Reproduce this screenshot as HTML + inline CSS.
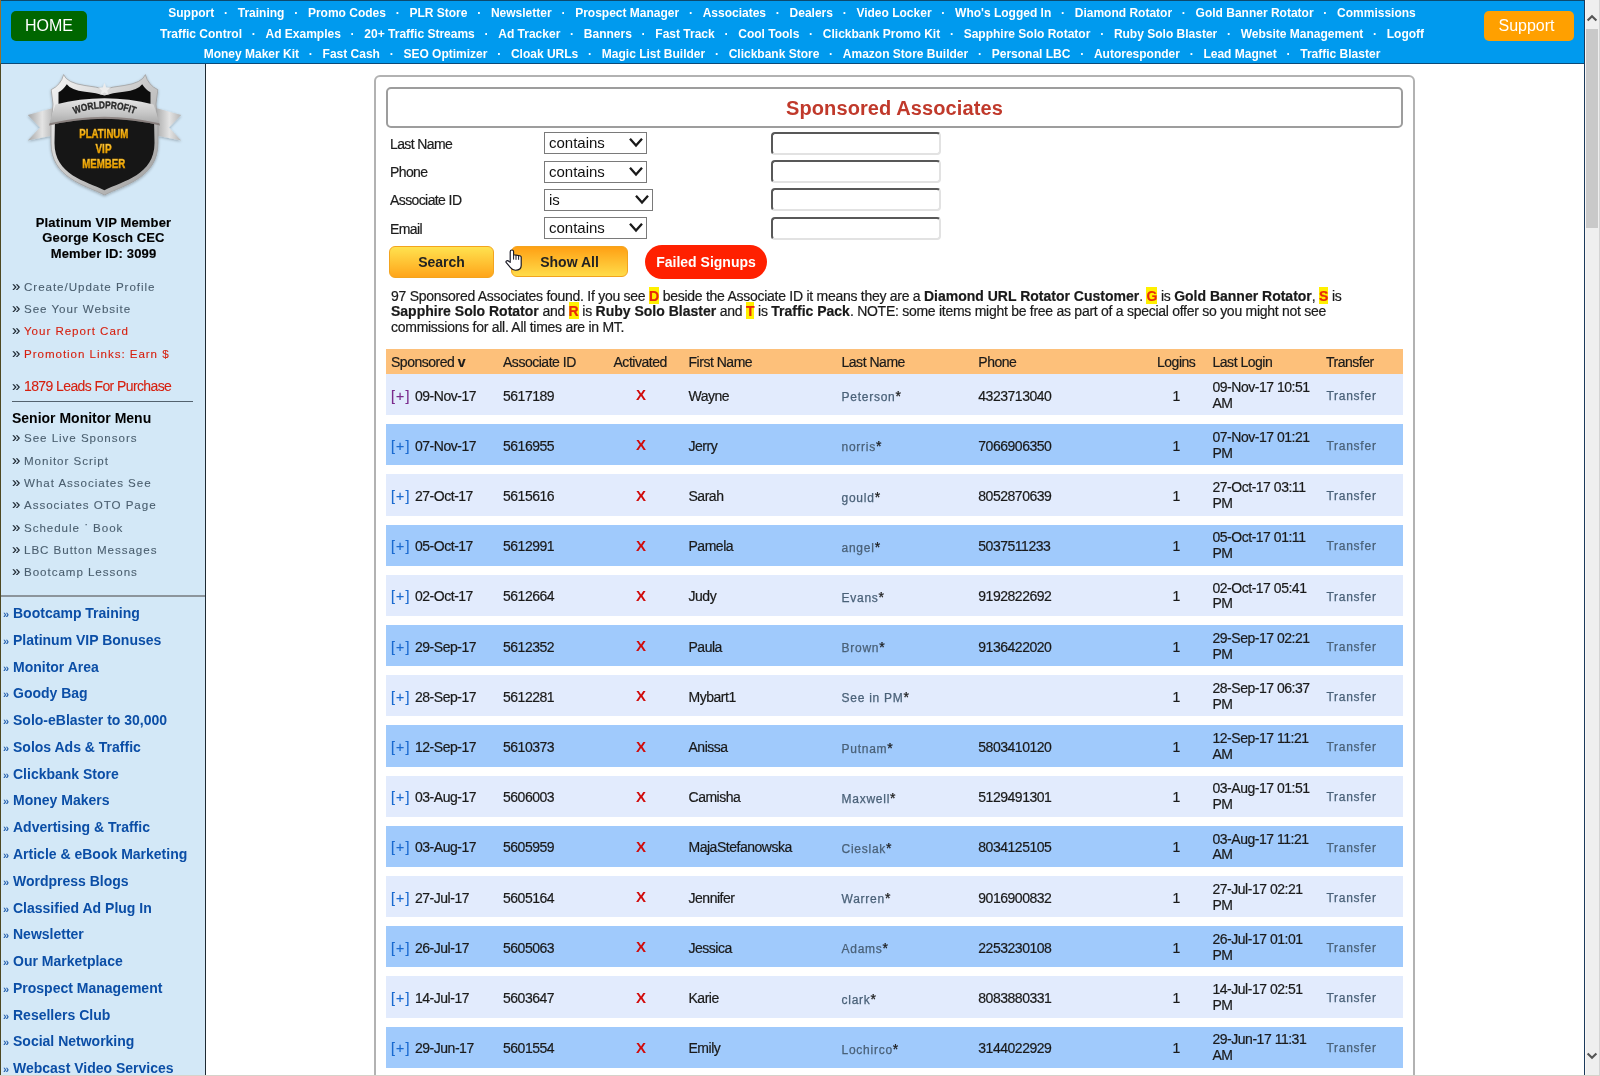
<!DOCTYPE html>
<html><head><meta charset="utf-8">
<style>
*{box-sizing:border-box}
html,body{margin:0;padding:0;width:1600px;height:1076px;overflow:hidden;background:#fff;font-family:"Liberation Sans",sans-serif;}
#wrap{position:absolute;left:0;top:0;width:1600px;height:1076px;will-change:transform}
.lab,.p13,.th,.t13{-webkit-text-stroke:0.2px currentColor}
.sl{-webkit-text-stroke:0.1px currentColor}
.vd{-webkit-text-stroke:0.25px currentColor}
.a{position:absolute;white-space:nowrap}
#lb{left:0;top:0;width:1px;height:1076px;background:linear-gradient(#9a7028 0,#9a7028 63px,#4d4822 64px)}
#hdr{left:1px;top:0;width:1583px;height:64px;background:#009aee;border-top:1px solid #0d4a6e;border-bottom:1px solid #0c4a78}
#home{left:11px;top:11px;width:76px;height:30px;background:#006600;border-radius:5px;color:#fff;font-size:16px;line-height:30px;text-align:center}
#sup{left:1484px;top:11px;width:90px;height:30px;background:#ffa000;border-radius:5px;color:#fff;font-size:16px;line-height:30px;text-align:center;padding-right:5px}
.nav{left:0;width:1584px;text-align:center;color:#fff;font-weight:bold;font-size:12px;line-height:14px}
.nav i{font-style:normal;display:inline-block;width:23.5px;text-align:center}
#side{left:1px;top:64px;width:205px;height:1012px;background:#d3e8f7;border-right:1px solid #1e2a33}
#rline{left:1584px;top:0;width:1px;height:1076px;background:#1a3a5c}
#sb{left:1585px;top:0;width:15px;height:1076px;background:#efefef}
#thumb{left:1586px;top:29px;width:12px;height:199px;background:#c9c9c9}
#bline{left:0;top:1075px;width:1600px;height:1px;background:#d6d2ca}
.sl{left:12px;font-size:11.6px;color:#4a5e6e;letter-spacing:0.95px;line-height:16px}
.sl b{font-weight:normal;font-size:15px;line-height:10px;color:#16202a;display:inline-block;width:12px;letter-spacing:0}
.red{color:#d6200f}
.bl{left:3px;font-size:14px;font-weight:bold;color:#0b4ea6;line-height:18px}
.bl b{font-size:11px;color:#2a64b0;display:inline-block;width:10px}
.t13{font-size:14px;letter-spacing:-0.48px;color:#1a1a1a;line-height:16px}
.vd{font-size:12px;color:#4a6178;letter-spacing:0.75px}
.vd i{font-style:normal;color:#1a1a1a;font-size:14px;letter-spacing:0}
.row{left:386px;width:1017px;height:41px}
.r1{background:#e2ebfd}
.r2{background:#a0cafc}

.box{left:374px;top:75px;width:1041px;height:1100px;border:2px solid #b2b2b2;border-radius:6px}
.tbox{left:386px;top:87px;width:1017px;height:41px;border:2px solid #9d9d9d;border-radius:5px}
.lab{left:390px;font-size:14px;letter-spacing:-0.6px;color:#1c1c1c;line-height:16px}
.sel{left:544px;width:103px;height:22px;border:1px solid #7a7a7a;background:#fff;font-size:15px;color:#111;padding-left:4px;line-height:19px}
.sel svg{position:absolute;right:3px;top:4px}
.inp{left:771px;width:170px;height:23px;border-top:2px solid #585858;border-left:2px solid #585858;border-bottom:2px solid #e2e2e2;border-right:2px solid #e2e2e2;border-radius:4px;background:#fff}
.btn{top:245px;height:33px;border-radius:6px;font-size:14px;font-weight:bold;text-align:center;line-height:31px}
.p13{left:391px;font-size:14px;color:#1a1a1a;line-height:16px;letter-spacing:-0.27px}
.p13 b{letter-spacing:0}
.hl{background:#fff000;color:#e82a0a;font-weight:bold;padding:1px 0 0 0;letter-spacing:0 !important}
.th{font-size:14px;letter-spacing:-0.48px;color:#1a1a1a;line-height:16px}
</style></head><body>
<div id="wrap">
<div class="a" id="hdr"></div>
<div class="a" id="home">HOME</div>
<div class="a" id="sup">Support</div>
<div class="a nav" style="top:6px">Support<i>·</i>Training<i>·</i>Promo Codes<i>·</i>PLR Store<i>·</i>Newsletter<i>·</i>Prospect Manager<i>·</i>Associates<i>·</i>Dealers<i>·</i>Video Locker<i>·</i>Who's Logged In<i>·</i>Diamond Rotator<i>·</i>Gold Banner Rotator<i>·</i>Commissions</div>
<div class="a nav" style="top:26.5px">Traffic Control<i>·</i>Ad Examples<i>·</i>20+ Traffic Streams<i>·</i>Ad Tracker<i>·</i>Banners<i>·</i>Fast Track<i>·</i>Cool Tools<i>·</i>Clickbank Promo Kit<i>·</i>Sapphire Solo Rotator<i>·</i>Ruby Solo Blaster<i>·</i>Website Management<i>·</i>Logoff</div>
<div class="a nav" style="top:47px">Money Maker Kit<i>·</i>Fast Cash<i>·</i>SEO Optimizer<i>·</i>Cloak URLs<i>·</i>Magic List Builder<i>·</i>Clickbank Store<i>·</i>Amazon Store Builder<i>·</i>Personal LBC<i>·</i>Autoresponder<i>·</i>Lead Magnet<i>·</i>Traffic Blaster</div>
<div class="a" id="side"></div>
<div class="a" id="lb"></div>
<svg class="a" style="left:20px;top:65px" width="170" height="140" viewBox="20 65 170 140">
<defs>
<linearGradient id="sil" x1="0" y1="0" x2="1" y2="1"><stop offset="0" stop-color="#f6f6f6"/><stop offset="0.5" stop-color="#c8c8c8"/><stop offset="1" stop-color="#9c9c9c"/></linearGradient>
<linearGradient id="rib" x1="0" y1="0" x2="0" y2="1"><stop offset="0" stop-color="#e6e6e6"/><stop offset="0.55" stop-color="#c6c6c6"/><stop offset="1" stop-color="#a4a4a4"/></linearGradient>
<linearGradient id="tail" x1="0" y1="0" x2="1" y2="0"><stop offset="0" stop-color="#a6a6a6"/><stop offset="0.55" stop-color="#e4e4e4"/><stop offset="1" stop-color="#b4b4b4"/></linearGradient>
<linearGradient id="gold" x1="0" y1="0" x2="0" y2="1"><stop offset="0" stop-color="#ffe58a"/><stop offset="0.5" stop-color="#f4ad0a"/><stop offset="1" stop-color="#d68c00"/></linearGradient>
<filter id="sh" x="-10%" y="-10%" width="120%" height="125%"><feGaussianBlur in="SourceAlpha" stdDeviation="1.5"/><feOffset dy="1.2"/><feComponentTransfer><feFuncA type="linear" slope="0.3"/></feComponentTransfer><feMerge><feMergeNode/><feMergeNode in="SourceGraphic"/></feMerge></filter>
</defs>
<g filter="url(#sh)">
<path d="M53 108 L27.8 115 L40 127.5 L27.8 140.4 L54 135.2 Z" fill="url(#tail)"/>
<path d="M156 108 L181.2 115 L169 127.5 L181.2 140.4 L155 135.2 Z" fill="url(#tail)"/>
<path d="M63.6 74.6 Q67 83 85 85.5 Q97 87 104.5 89 Q112 87 124 85.5 Q142 83 145.4 74.6 Q148 85 157.8 89.7 L156 104 L158 126 L158 143 C158 178 124 185 104.5 195 C85 185 51 178 51 143 L51 126 L53 104 L51.2 89.7 Q61 85 63.6 74.6 Z" fill="url(#sil)" stroke="#a0a0a0" stroke-width="0.8"/>
<path d="M66.8 84.2 Q71 90 85 91.7 Q97 93 104.5 95.5 Q112 93 124 91.7 Q138 90 142.2 84.2 Q146 90 150.5 92.3 L150.5 112 L58.5 112 L58.5 92.3 Q63 90 66.8 84.2 Z" fill="#101010"/>
<path d="M55 118 L154 118 L154.5 143 C154.5 175 123 181 104.4 190.2 C86 181 54.5 175 54.5 143 Z" fill="#141414"/>
<path d="M104.5 83 L106.2 87.4 L110.8 87.6 L107.2 90.4 L108.5 95 L104.5 92.3 L100.5 95 L101.8 90.4 L98.2 87.6 L102.8 87.4 Z" fill="#ececec"/>
<path d="M55.5 104.5 Q104.5 92 153.5 104.5 Q157 114 160 125.5 Q104.5 112 49 125.5 Q52 114 55.5 104.5 Z" fill="url(#rib)"/>
<path d="M49 125.5 Q104.5 112 160 125.5 L159.3 123.3 Q104.5 110 49.7 123.3 Z" fill="#6a5a55" opacity="0.55"/>
</g>
<path id="arc" d="M73 114.5 Q104.5 102 136 114.5" fill="none"/>
<text font-family="Liberation Sans" font-weight="bold" font-size="10" fill="#2a2a2a" stroke="#2a2a2a" stroke-width="0.35"><textPath href="#arc" startOffset="50%" text-anchor="middle" textLength="62" lengthAdjust="spacingAndGlyphs">WORLDPROFIT</textPath></text>
<g font-family="Liberation Sans" font-weight="bold" fill="url(#gold)" text-anchor="middle" stroke="#e8a000" stroke-width="0.5">
<text x="103.8" y="138.3" font-size="13.5" textLength="49" lengthAdjust="spacingAndGlyphs">PLATINUM</text>
<text x="103.5" y="153.2" font-size="13.5" textLength="16" lengthAdjust="spacingAndGlyphs">VIP</text>
<text x="103.7" y="167.8" font-size="13.5" textLength="43" lengthAdjust="spacingAndGlyphs">MEMBER</text>
</g>
</svg>
<div class="a" style="left:1px;width:205px;text-align:center;top:214.90px;font-size:13px;line-height:15px;font-weight:bold;color:#000;letter-spacing:0.15px;-webkit-text-stroke:0.15px #000">Platinum VIP Member</div>
<div class="a" style="left:1px;width:205px;text-align:center;top:230.10px;font-size:13px;line-height:15px;font-weight:bold;color:#000;letter-spacing:0.15px;-webkit-text-stroke:0.15px #000">George Kosch CEC</div>
<div class="a" style="left:1px;width:205px;text-align:center;top:245.70px;font-size:13px;line-height:15px;font-weight:bold;color:#000;letter-spacing:0.15px;-webkit-text-stroke:0.15px #000">Member ID: 3099</div>
<div class="a sl" style="top:278.87px"><b>»</b><span class="">Create/Update Profile</span></div>
<div class="a sl" style="top:300.97px"><b>»</b><span class="">See Your Website</span></div>
<div class="a sl" style="top:323.27px"><b>»</b><span class="red">Your Report Card</span></div>
<div class="a sl" style="top:345.57px"><b>»</b><span class="red">Promotion Links: Earn $</span></div>
<div class="a sl" style="top:378.43px"><b>»</b><span class="red" style="font-size:14px;letter-spacing:-0.6px">1879 Leads For Purchase</span></div>
<div class="a" style="left:12px;top:401px;width:181px;height:1px;background:#53626e"></div>
<div class="a" style="left:12px;top:408.67px;font-size:14px;line-height:18px;font-weight:bold;color:#000">Senior Monitor Menu</div>
<div class="a sl" style="top:430.47px"><b>»</b>See Live Sponsors</div>
<div class="a sl" style="top:452.77px"><b>»</b>Monitor Script</div>
<div class="a sl" style="top:475.07px"><b>»</b>What Associates See</div>
<div class="a sl" style="top:497.37px"><b>»</b>Associates OTO Page</div>
<div class="a sl" style="top:519.67px"><b>»</b>Schedule <span style="position:relative;top:-4px">·</span> Book</div>
<div class="a sl" style="top:541.97px"><b>»</b>LBC Button Messages</div>
<div class="a sl" style="top:564.27px"><b>»</b>Bootcamp Lessons</div>
<div class="a" style="left:1px;top:595px;width:204px;height:2px;background:#8c959c"></div>
<div class="a bl" style="top:603.97px"><b>»</b>Bootcamp Training</div>
<div class="a bl" style="top:630.75px"><b>»</b>Platinum VIP Bonuses</div>
<div class="a bl" style="top:657.53px"><b>»</b>Monitor Area</div>
<div class="a bl" style="top:684.31px"><b>»</b>Goody Bag</div>
<div class="a bl" style="top:711.09px"><b>»</b>Solo-eBlaster to 30,000</div>
<div class="a bl" style="top:737.87px"><b>»</b>Solos Ads &amp; Traffic</div>
<div class="a bl" style="top:764.65px"><b>»</b>Clickbank Store</div>
<div class="a bl" style="top:791.43px"><b>»</b>Money Makers</div>
<div class="a bl" style="top:818.21px"><b>»</b>Advertising &amp; Traffic</div>
<div class="a bl" style="top:844.99px"><b>»</b>Article &amp; eBook Marketing</div>
<div class="a bl" style="top:871.77px"><b>»</b>Wordpress Blogs</div>
<div class="a bl" style="top:898.55px"><b>»</b>Classified Ad Plug In</div>
<div class="a bl" style="top:925.33px"><b>»</b>Newsletter</div>
<div class="a bl" style="top:952.11px"><b>»</b>Our Marketplace</div>
<div class="a bl" style="top:978.89px"><b>»</b>Prospect Management</div>
<div class="a bl" style="top:1005.67px"><b>»</b>Resellers Club</div>
<div class="a bl" style="top:1032.45px"><b>»</b>Social Networking</div>
<div class="a bl" style="top:1059.23px"><b>»</b>Webcast Video Services</div>
<div class="a box"></div>
<div class="a tbox"></div>
<div class="a" style="left:374px;width:1041px;text-align:center;top:96.39px;font-size:20px;line-height:24px;font-weight:bold;color:#c0392b;letter-spacing:0.1px">Sponsored Associates</div>
<div class="a lab" style="top:135.97px">Last Name</div>
<div class="a sel" style="top:132.2px;width:103px">contains<svg width="14" height="11" viewBox="0 0 14 11"><path d="M1 1.8 L7 8.6 L13 1.8" fill="none" stroke="#1a1a1a" stroke-width="2.3"/></svg></div>
<div class="a inp" style="top:131.5px"></div>
<div class="a lab" style="top:164.17px">Phone</div>
<div class="a sel" style="top:160.6px;width:103px">contains<svg width="14" height="11" viewBox="0 0 14 11"><path d="M1 1.8 L7 8.6 L13 1.8" fill="none" stroke="#1a1a1a" stroke-width="2.3"/></svg></div>
<div class="a inp" style="top:160.0px"></div>
<div class="a lab" style="top:192.37px">Associate ID</div>
<div class="a sel" style="top:189.0px;width:109px">is<svg width="14" height="11" viewBox="0 0 14 11"><path d="M1 1.8 L7 8.6 L13 1.8" fill="none" stroke="#1a1a1a" stroke-width="2.3"/></svg></div>
<div class="a inp" style="top:188.3px"></div>
<div class="a lab" style="top:220.57px">Email</div>
<div class="a sel" style="top:217.3px;width:103px">contains<svg width="14" height="11" viewBox="0 0 14 11"><path d="M1 1.8 L7 8.6 L13 1.8" fill="none" stroke="#1a1a1a" stroke-width="2.3"/></svg></div>
<div class="a inp" style="top:216.5px"></div>
<div class="a btn" style="left:389px;width:105px;top:245.5px;height:32px;line-height:30px;background:linear-gradient(#ffe24f,#ffa51a);border:1px solid #f3a41e;color:#222">Search</div>
<div class="a btn" style="left:511px;width:117px;top:246px;height:31px;line-height:30.5px;background:linear-gradient(#ffa014,#ffdc4a);border:1px solid #f3a41e;color:#222">Show All</div>
<div class="a btn" style="left:645px;width:122px;top:245px;height:34px;line-height:34px;border-radius:17px;background:#ff2000;color:#fff">Failed Signups</div>
<svg class="a" style="left:498px;top:244px" width="32" height="32" viewBox="0 0 32 32"><path d="M12.2 18.3V7.7Q12.2 6 13.9 6Q15.6 6 15.6 7.7V10.8L18 11.1L20.5 11.5L22.5 12Q23.2 12.3 23.2 13.2V21.5Q23.2 26.2 17.5 26.2Q14.5 26.2 12.5 23.6L8.3 18.7Q7.5 17.6 8.5 16.9Q9.7 16.2 11.2 17.6Z" fill="#fff" stroke="#141420" stroke-width="1.15" stroke-linejoin="round"/><path d="M15.6 11V15.6M18 11.3V15.8M20.6 11.7V15.8" stroke="#141420" stroke-width="1"/></svg>
<div class="a p13" style="top:287.87px">97 Sponsored Associates found. If you see <span class="hl">D</span> beside the Associate ID it means they are a <b>Diamond URL Rotator Customer</b>. <span class="hl">G</span> is <b>Gold Banner Rotator</b>, <span class="hl">S</span> is</div>
<div class="a p13" style="top:303.27px"><b>Sapphire Solo Rotator</b> and <span class="hl">R</span> is <b>Ruby Solo Blaster</b> and <span class="hl">T</span> is <b>Traffic Pack</b>. NOTE: some items might be free as part of a special offer so you might not see</div>
<div class="a p13" style="top:319.07px">commissions for all. All times are in MT.</div>
<div class="a" style="left:386px;top:349px;width:1017px;height:25px;background:#fdc07a"></div>
<div class="a th" style="left:391px;top:353.77px">Sponsored <b>v</b></div>
<div class="a th" style="left:503px;top:353.77px">Associate ID</div>
<div class="a th" style="left:613.5px;top:353.77px">Activated</div>
<div class="a th" style="left:688.5px;top:353.77px">First Name</div>
<div class="a th" style="left:841.5px;top:353.77px">Last Name</div>
<div class="a th" style="left:978.3px;top:353.77px">Phone</div>
<div class="a th" style="left:1157px;top:353.77px">Logins</div>
<div class="a th" style="left:1212.5px;top:353.77px">Last Login</div>
<div class="a th" style="left:1326px;top:353.77px">Transfer</div>
<div class="a row r1" style="top:374px;height:41px"></div>
<div class="a t13" style="left:391px;top:387.57px;color:#7a2a8c;letter-spacing:1.2px">[+]</div>
<div class="a t13" style="left:415px;top:387.57px">09-Nov-17</div>
<div class="a t13" style="left:503px;top:387.57px">5617189</div>
<div class="a" style="left:636px;top:386.24px;font-size:15px;line-height:18px;font-weight:bold;color:#d10a0a">X</div>
<div class="a t13" style="left:688.5px;top:387.57px">Wayne</div>
<div class="a vd" style="left:841.5px;top:388.23px;line-height:16px">Peterson<i>*</i></div>
<div class="a t13" style="left:978.3px;top:387.57px">4323713040</div>
<div class="a t13" style="left:1172.5px;top:387.57px">1</div>
<div class="a t13" style="left:1212.5px;top:379.77px;line-height:15.8px">09-Nov-17 10:51<br>AM</div>
<div class="a vd" style="left:1326.4px;top:387.83px;line-height:16px">Transfer</div>
<div class="a row r2" style="top:424px;height:41px"></div>
<div class="a t13" style="left:391px;top:437.77px;color:#1a6ad0;letter-spacing:1.2px">[+]</div>
<div class="a t13" style="left:415px;top:437.77px">07-Nov-17</div>
<div class="a t13" style="left:503px;top:437.77px">5616955</div>
<div class="a" style="left:636px;top:436.44px;font-size:15px;line-height:18px;font-weight:bold;color:#d10a0a">X</div>
<div class="a t13" style="left:688.5px;top:437.77px">Jerry</div>
<div class="a vd" style="left:841.5px;top:438.43px;line-height:16px">norris<i>*</i></div>
<div class="a t13" style="left:978.3px;top:437.77px">7066906350</div>
<div class="a t13" style="left:1172.5px;top:437.77px">1</div>
<div class="a t13" style="left:1212.5px;top:429.97px;line-height:15.8px">07-Nov-17 01:21<br>PM</div>
<div class="a vd" style="left:1326.4px;top:438.03px;line-height:16px">Transfer</div>
<div class="a row r1" style="top:474px;height:42px"></div>
<div class="a t13" style="left:391px;top:487.97px;color:#1a6ad0;letter-spacing:1.2px">[+]</div>
<div class="a t13" style="left:415px;top:487.97px">27-Oct-17</div>
<div class="a t13" style="left:503px;top:487.97px">5615616</div>
<div class="a" style="left:636px;top:486.64px;font-size:15px;line-height:18px;font-weight:bold;color:#d10a0a">X</div>
<div class="a t13" style="left:688.5px;top:487.97px">Sarah</div>
<div class="a vd" style="left:841.5px;top:488.63px;line-height:16px">gould<i>*</i></div>
<div class="a t13" style="left:978.3px;top:487.97px">8052870639</div>
<div class="a t13" style="left:1172.5px;top:487.97px">1</div>
<div class="a t13" style="left:1212.5px;top:480.17px;line-height:15.8px">27-Oct-17 03:11<br>PM</div>
<div class="a vd" style="left:1326.4px;top:488.23px;line-height:16px">Transfer</div>
<div class="a row r2" style="top:525px;height:41px"></div>
<div class="a t13" style="left:391px;top:538.17px;color:#1a6ad0;letter-spacing:1.2px">[+]</div>
<div class="a t13" style="left:415px;top:538.17px">05-Oct-17</div>
<div class="a t13" style="left:503px;top:538.17px">5612991</div>
<div class="a" style="left:636px;top:536.84px;font-size:15px;line-height:18px;font-weight:bold;color:#d10a0a">X</div>
<div class="a t13" style="left:688.5px;top:538.17px">Pamela</div>
<div class="a vd" style="left:841.5px;top:538.83px;line-height:16px">angel<i>*</i></div>
<div class="a t13" style="left:978.3px;top:538.17px">5037511233</div>
<div class="a t13" style="left:1172.5px;top:538.17px">1</div>
<div class="a t13" style="left:1212.5px;top:530.37px;line-height:15.8px">05-Oct-17 01:11<br>PM</div>
<div class="a vd" style="left:1326.4px;top:538.43px;line-height:16px">Transfer</div>
<div class="a row r1" style="top:575px;height:41px"></div>
<div class="a t13" style="left:391px;top:588.37px;color:#1a6ad0;letter-spacing:1.2px">[+]</div>
<div class="a t13" style="left:415px;top:588.37px">02-Oct-17</div>
<div class="a t13" style="left:503px;top:588.37px">5612664</div>
<div class="a" style="left:636px;top:587.04px;font-size:15px;line-height:18px;font-weight:bold;color:#d10a0a">X</div>
<div class="a t13" style="left:688.5px;top:588.37px">Judy</div>
<div class="a vd" style="left:841.5px;top:589.03px;line-height:16px">Evans<i>*</i></div>
<div class="a t13" style="left:978.3px;top:588.37px">9192822692</div>
<div class="a t13" style="left:1172.5px;top:588.37px">1</div>
<div class="a t13" style="left:1212.5px;top:580.57px;line-height:15.8px">02-Oct-17 05:41<br>PM</div>
<div class="a vd" style="left:1326.4px;top:588.63px;line-height:16px">Transfer</div>
<div class="a row r2" style="top:625px;height:41px"></div>
<div class="a t13" style="left:391px;top:638.57px;color:#1a6ad0;letter-spacing:1.2px">[+]</div>
<div class="a t13" style="left:415px;top:638.57px">29-Sep-17</div>
<div class="a t13" style="left:503px;top:638.57px">5612352</div>
<div class="a" style="left:636px;top:637.24px;font-size:15px;line-height:18px;font-weight:bold;color:#d10a0a">X</div>
<div class="a t13" style="left:688.5px;top:638.57px">Paula</div>
<div class="a vd" style="left:841.5px;top:639.23px;line-height:16px">Brown<i>*</i></div>
<div class="a t13" style="left:978.3px;top:638.57px">9136422020</div>
<div class="a t13" style="left:1172.5px;top:638.57px">1</div>
<div class="a t13" style="left:1212.5px;top:630.77px;line-height:15.8px">29-Sep-17 02:21<br>PM</div>
<div class="a vd" style="left:1326.4px;top:638.83px;line-height:16px">Transfer</div>
<div class="a row r1" style="top:675px;height:41px"></div>
<div class="a t13" style="left:391px;top:688.77px;color:#1a6ad0;letter-spacing:1.2px">[+]</div>
<div class="a t13" style="left:415px;top:688.77px">28-Sep-17</div>
<div class="a t13" style="left:503px;top:688.77px">5612281</div>
<div class="a" style="left:636px;top:687.44px;font-size:15px;line-height:18px;font-weight:bold;color:#d10a0a">X</div>
<div class="a t13" style="left:688.5px;top:688.77px">Mybart1</div>
<div class="a vd" style="left:841.5px;top:689.43px;line-height:16px">See in PM<i>*</i></div>
<div class="a t13" style="left:1172.5px;top:688.77px">1</div>
<div class="a t13" style="left:1212.5px;top:680.97px;line-height:15.8px">28-Sep-17 06:37<br>PM</div>
<div class="a vd" style="left:1326.4px;top:689.03px;line-height:16px">Transfer</div>
<div class="a row r2" style="top:725px;height:42px"></div>
<div class="a t13" style="left:391px;top:738.97px;color:#1a6ad0;letter-spacing:1.2px">[+]</div>
<div class="a t13" style="left:415px;top:738.97px">12-Sep-17</div>
<div class="a t13" style="left:503px;top:738.97px">5610373</div>
<div class="a" style="left:636px;top:737.64px;font-size:15px;line-height:18px;font-weight:bold;color:#d10a0a">X</div>
<div class="a t13" style="left:688.5px;top:738.97px">Anissa</div>
<div class="a vd" style="left:841.5px;top:739.63px;line-height:16px">Putnam<i>*</i></div>
<div class="a t13" style="left:978.3px;top:738.97px">5803410120</div>
<div class="a t13" style="left:1172.5px;top:738.97px">1</div>
<div class="a t13" style="left:1212.5px;top:731.17px;line-height:15.8px">12-Sep-17 11:21<br>AM</div>
<div class="a vd" style="left:1326.4px;top:739.23px;line-height:16px">Transfer</div>
<div class="a row r1" style="top:776px;height:41px"></div>
<div class="a t13" style="left:391px;top:789.17px;color:#1a6ad0;letter-spacing:1.2px">[+]</div>
<div class="a t13" style="left:415px;top:789.17px">03-Aug-17</div>
<div class="a t13" style="left:503px;top:789.17px">5606003</div>
<div class="a" style="left:636px;top:787.84px;font-size:15px;line-height:18px;font-weight:bold;color:#d10a0a">X</div>
<div class="a t13" style="left:688.5px;top:789.17px">Camisha</div>
<div class="a vd" style="left:841.5px;top:789.83px;line-height:16px">Maxwell<i>*</i></div>
<div class="a t13" style="left:978.3px;top:789.17px">5129491301</div>
<div class="a t13" style="left:1172.5px;top:789.17px">1</div>
<div class="a t13" style="left:1212.5px;top:781.37px;line-height:15.8px">03-Aug-17 01:51<br>PM</div>
<div class="a vd" style="left:1326.4px;top:789.43px;line-height:16px">Transfer</div>
<div class="a row r2" style="top:826px;height:41px"></div>
<div class="a t13" style="left:391px;top:839.37px;color:#1a6ad0;letter-spacing:1.2px">[+]</div>
<div class="a t13" style="left:415px;top:839.37px">03-Aug-17</div>
<div class="a t13" style="left:503px;top:839.37px">5605959</div>
<div class="a" style="left:636px;top:838.04px;font-size:15px;line-height:18px;font-weight:bold;color:#d10a0a">X</div>
<div class="a t13" style="left:688.5px;top:839.37px">MajaStefanowska</div>
<div class="a vd" style="left:841.5px;top:840.03px;line-height:16px">Cieslak<i>*</i></div>
<div class="a t13" style="left:978.3px;top:839.37px">8034125105</div>
<div class="a t13" style="left:1172.5px;top:839.37px">1</div>
<div class="a t13" style="left:1212.5px;top:831.57px;line-height:15.8px">03-Aug-17 11:21<br>AM</div>
<div class="a vd" style="left:1326.4px;top:839.63px;line-height:16px">Transfer</div>
<div class="a row r1" style="top:876px;height:41px"></div>
<div class="a t13" style="left:391px;top:889.57px;color:#1a6ad0;letter-spacing:1.2px">[+]</div>
<div class="a t13" style="left:415px;top:889.57px">27-Jul-17</div>
<div class="a t13" style="left:503px;top:889.57px">5605164</div>
<div class="a" style="left:636px;top:888.24px;font-size:15px;line-height:18px;font-weight:bold;color:#d10a0a">X</div>
<div class="a t13" style="left:688.5px;top:889.57px">Jennifer</div>
<div class="a vd" style="left:841.5px;top:890.23px;line-height:16px">Warren<i>*</i></div>
<div class="a t13" style="left:978.3px;top:889.57px">9016900832</div>
<div class="a t13" style="left:1172.5px;top:889.57px">1</div>
<div class="a t13" style="left:1212.5px;top:881.77px;line-height:15.8px">27-Jul-17 02:21<br>PM</div>
<div class="a vd" style="left:1326.4px;top:889.83px;line-height:16px">Transfer</div>
<div class="a row r2" style="top:926px;height:41px"></div>
<div class="a t13" style="left:391px;top:939.77px;color:#1a6ad0;letter-spacing:1.2px">[+]</div>
<div class="a t13" style="left:415px;top:939.77px">26-Jul-17</div>
<div class="a t13" style="left:503px;top:939.77px">5605063</div>
<div class="a" style="left:636px;top:938.44px;font-size:15px;line-height:18px;font-weight:bold;color:#d10a0a">X</div>
<div class="a t13" style="left:688.5px;top:939.77px">Jessica</div>
<div class="a vd" style="left:841.5px;top:940.43px;line-height:16px">Adams<i>*</i></div>
<div class="a t13" style="left:978.3px;top:939.77px">2253230108</div>
<div class="a t13" style="left:1172.5px;top:939.77px">1</div>
<div class="a t13" style="left:1212.5px;top:931.97px;line-height:15.8px">26-Jul-17 01:01<br>PM</div>
<div class="a vd" style="left:1326.4px;top:940.03px;line-height:16px">Transfer</div>
<div class="a row r1" style="top:976px;height:42px"></div>
<div class="a t13" style="left:391px;top:989.97px;color:#1a6ad0;letter-spacing:1.2px">[+]</div>
<div class="a t13" style="left:415px;top:989.97px">14-Jul-17</div>
<div class="a t13" style="left:503px;top:989.97px">5603647</div>
<div class="a" style="left:636px;top:988.64px;font-size:15px;line-height:18px;font-weight:bold;color:#d10a0a">X</div>
<div class="a t13" style="left:688.5px;top:989.97px">Karie</div>
<div class="a vd" style="left:841.5px;top:990.63px;line-height:16px">clark<i>*</i></div>
<div class="a t13" style="left:978.3px;top:989.97px">8083880331</div>
<div class="a t13" style="left:1172.5px;top:989.97px">1</div>
<div class="a t13" style="left:1212.5px;top:982.17px;line-height:15.8px">14-Jul-17 02:51<br>PM</div>
<div class="a vd" style="left:1326.4px;top:990.23px;line-height:16px">Transfer</div>
<div class="a row r2" style="top:1027px;height:41px"></div>
<div class="a t13" style="left:391px;top:1040.17px;color:#1a6ad0;letter-spacing:1.2px">[+]</div>
<div class="a t13" style="left:415px;top:1040.17px">29-Jun-17</div>
<div class="a t13" style="left:503px;top:1040.17px">5601554</div>
<div class="a" style="left:636px;top:1038.84px;font-size:15px;line-height:18px;font-weight:bold;color:#d10a0a">X</div>
<div class="a t13" style="left:688.5px;top:1040.17px">Emily</div>
<div class="a vd" style="left:841.5px;top:1040.83px;line-height:16px">Lochirco<i>*</i></div>
<div class="a t13" style="left:978.3px;top:1040.17px">3144022929</div>
<div class="a t13" style="left:1172.5px;top:1040.17px">1</div>
<div class="a t13" style="left:1212.5px;top:1032.37px;line-height:15.8px">29-Jun-17 11:31<br>AM</div>
<div class="a vd" style="left:1326.4px;top:1040.43px;line-height:16px">Transfer</div>
<div class="a" id="rline"></div>
<div class="a" id="sb"></div>
<div class="a" id="thumb"></div>
<div class="a" style="left:1599px;top:0;width:1px;height:1076px;background:#d4d4d4"></div>
<div class="a" style="left:1585px;top:0;width:1px;height:1076px;background:#fbf6f4"></div>
<svg class="a" style="left:1585px;top:10px" width="14" height="14" viewBox="0 0 14 14"><path d="M2.6 10.6 L7 6.2 L11.4 10.6" fill="none" stroke="#555" stroke-width="2.1"/></svg>
<svg class="a" style="left:1585px;top:1049px" width="14" height="14" viewBox="0 0 14 14"><path d="M2.6 4.4 L7 8.8 L11.4 4.4" fill="none" stroke="#555" stroke-width="2.1"/></svg>
<div class="a" id="bline"></div>
</div>
</body></html>
